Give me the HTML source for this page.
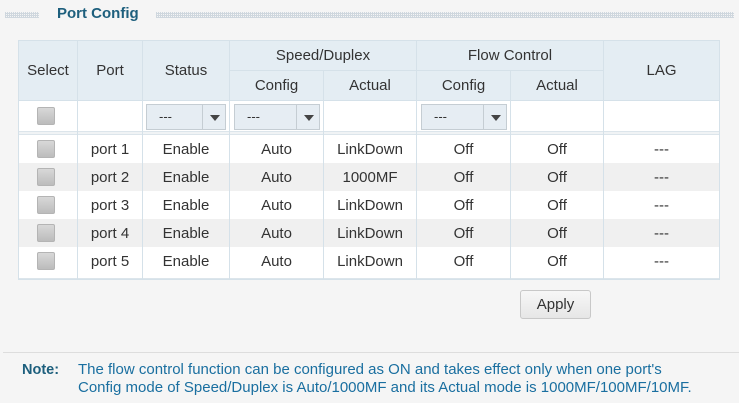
<!DOCTYPE html>
<html><head><meta charset="utf-8"><style>
*{margin:0;padding:0;box-sizing:border-box}
body{width:739px;height:403px;background:#f5f5f5;font-family:"Liberation Sans",Arial,sans-serif;font-size:15px;color:#333;position:relative;overflow:hidden}
.a{position:absolute}
.dots{position:absolute;top:12px;height:6px;background-image:repeating-linear-gradient(90deg,#cfd7de 0 1px,transparent 1px 2px),repeating-linear-gradient(0deg,#cfd7de 0 1px,transparent 1px 2px)}
.title{left:57px;top:5px;font-size:15px;font-weight:bold;color:#1d5f7d}
.hdr{background:#e4edf3}
.c{position:absolute;text-align:center;display:flex;align-items:center;justify-content:center}
.vl{position:absolute;width:1px;background:#d5e1e9}
.cb{position:absolute;width:18px;height:18px;border:1px solid #b4b4b4;border-radius:2px;background:linear-gradient(#d8d8d8,#bcbcbc)}
.sel{position:absolute;top:104px;height:26px;border:1px solid #c5cdd3;background:#e6edf3}
.sel span{position:absolute;left:12px;top:4px;font-size:13px}
.sel i{position:absolute;right:0;top:0;width:23px;height:24px;border-left:1px solid #c5cdd3}
.sel i:after{content:"";position:absolute;left:7px;top:10px;border-left:5px solid transparent;border-right:5px solid transparent;border-top:6px solid #444}
</style></head><body>
<div class="dots" style="left:5px;width:34px"></div>
<div class="a title">Port Config</div>
<div class="dots" style="left:156px;width:578px"></div>

<div class="a" style="left:18px;top:40px;width:702px;height:240px;border:1px solid #d5e1e9;background:#fff"></div>
<div class="a hdr" style="left:19px;top:41px;width:700px;height:59px"></div>
<div class="a" style="left:229px;top:70px;width:374px;height:1px;background:#d5e1e9"></div>
<div class="a" style="left:19px;top:100px;width:700px;height:1px;background:#d5e1e9"></div>
<div class="a" style="left:19px;top:131px;width:700px;height:4px;background:#f0f3f5;border-top:1px solid #dce5eb;border-bottom:1px solid #dce5eb"></div>
<div class="a" style="left:19px;top:163px;width:700px;height:28px;background:#f0f0f0"></div>
<div class="a" style="left:19px;top:219px;width:700px;height:28px;background:#f0f0f0"></div>
<div class="a" style="left:19px;top:275px;width:700px;height:4px;background:#fff;border-bottom:1px solid #dce5eb"></div>

<div class="vl" style="left:77px;top:41px;height:238px"></div>
<div class="vl" style="left:142px;top:41px;height:238px"></div>
<div class="vl" style="left:229px;top:41px;height:238px"></div>
<div class="vl" style="left:323px;top:70px;height:209px"></div>
<div class="vl" style="left:416px;top:41px;height:238px"></div>
<div class="vl" style="left:510px;top:70px;height:209px"></div>
<div class="vl" style="left:603px;top:41px;height:238px"></div>

<div class="c" style="left:19px;top:41px;width:58px;height:59px">Select</div>
<div class="c" style="left:78px;top:41px;width:64px;height:59px">Port</div>
<div class="c" style="left:143px;top:41px;width:86px;height:59px">Status</div>
<div class="c" style="left:230px;top:41px;width:186px;height:29px">Speed/Duplex</div>
<div class="c" style="left:417px;top:41px;width:186px;height:29px">Flow Control</div>
<div class="c" style="left:230px;top:71px;width:93px;height:29px">Config</div>
<div class="c" style="left:324px;top:71px;width:92px;height:29px">Actual</div>
<div class="c" style="left:417px;top:71px;width:93px;height:29px">Config</div>
<div class="c" style="left:511px;top:71px;width:92px;height:29px">Actual</div>
<div class="c" style="left:604px;top:41px;width:115px;height:59px">LAG</div>

<div class="cb" style="left:37px;top:107px"></div>
<div class="sel" style="left:146px;width:80px"><span>---</span><i></i></div>
<div class="sel" style="left:234px;width:86px"><span>---</span><i></i></div>
<div class="sel" style="left:421px;width:86px"><span>---</span><i></i></div>

<div class="cb" style="left:37px;top:140px"></div>
<div class="cb" style="left:37px;top:168px"></div>
<div class="cb" style="left:37px;top:196px"></div>
<div class="cb" style="left:37px;top:224px"></div>
<div class="cb" style="left:37px;top:252px"></div>

<div class="c" style="left:78px;top:135px;width:64px;height:28px">port 1</div>
<div class="c" style="left:143px;top:135px;width:86px;height:28px">Enable</div>
<div class="c" style="left:230px;top:135px;width:93px;height:28px">Auto</div>
<div class="c" style="left:324px;top:135px;width:92px;height:28px">LinkDown</div>
<div class="c" style="left:417px;top:135px;width:93px;height:28px">Off</div>
<div class="c" style="left:511px;top:135px;width:92px;height:28px">Off</div>
<div class="c" style="left:604px;top:135px;width:115px;height:28px">---</div>

<div class="c" style="left:78px;top:163px;width:64px;height:28px">port 2</div>
<div class="c" style="left:143px;top:163px;width:86px;height:28px">Enable</div>
<div class="c" style="left:230px;top:163px;width:93px;height:28px">Auto</div>
<div class="c" style="left:324px;top:163px;width:92px;height:28px">1000MF</div>
<div class="c" style="left:417px;top:163px;width:93px;height:28px">Off</div>
<div class="c" style="left:511px;top:163px;width:92px;height:28px">Off</div>
<div class="c" style="left:604px;top:163px;width:115px;height:28px">---</div>

<div class="c" style="left:78px;top:191px;width:64px;height:28px">port 3</div>
<div class="c" style="left:143px;top:191px;width:86px;height:28px">Enable</div>
<div class="c" style="left:230px;top:191px;width:93px;height:28px">Auto</div>
<div class="c" style="left:324px;top:191px;width:92px;height:28px">LinkDown</div>
<div class="c" style="left:417px;top:191px;width:93px;height:28px">Off</div>
<div class="c" style="left:511px;top:191px;width:92px;height:28px">Off</div>
<div class="c" style="left:604px;top:191px;width:115px;height:28px">---</div>

<div class="c" style="left:78px;top:219px;width:64px;height:28px">port 4</div>
<div class="c" style="left:143px;top:219px;width:86px;height:28px">Enable</div>
<div class="c" style="left:230px;top:219px;width:93px;height:28px">Auto</div>
<div class="c" style="left:324px;top:219px;width:92px;height:28px">LinkDown</div>
<div class="c" style="left:417px;top:219px;width:93px;height:28px">Off</div>
<div class="c" style="left:511px;top:219px;width:92px;height:28px">Off</div>
<div class="c" style="left:604px;top:219px;width:115px;height:28px">---</div>

<div class="c" style="left:78px;top:247px;width:64px;height:28px">port 5</div>
<div class="c" style="left:143px;top:247px;width:86px;height:28px">Enable</div>
<div class="c" style="left:230px;top:247px;width:93px;height:28px">Auto</div>
<div class="c" style="left:324px;top:247px;width:92px;height:28px">LinkDown</div>
<div class="c" style="left:417px;top:247px;width:93px;height:28px">Off</div>
<div class="c" style="left:511px;top:247px;width:92px;height:28px">Off</div>
<div class="c" style="left:604px;top:247px;width:115px;height:28px">---</div>

<div class="c" style="left:520px;top:290px;width:71px;height:29px;border:1px solid #c8c8c8;border-radius:3px;background:linear-gradient(#f7f7f7,#e6e6e6)">Apply</div>

<div class="a" style="left:3px;top:352px;width:736px;height:1px;background:#dddddd"></div>
<div class="a" style="left:22px;top:362px;font-weight:bold;color:#1d5f7d;font-size:14.5px">Note:</div>
<div class="a" style="left:78px;top:361px;color:#1a6fa0;font-size:15px;line-height:18px;width:661px;white-space:nowrap">The flow control function can be configured as ON and takes effect only when one port's<br>Config mode of Speed/Duplex is Auto/1000MF and its Actual mode is 1000MF/100MF/10MF.</div>
</body></html>
